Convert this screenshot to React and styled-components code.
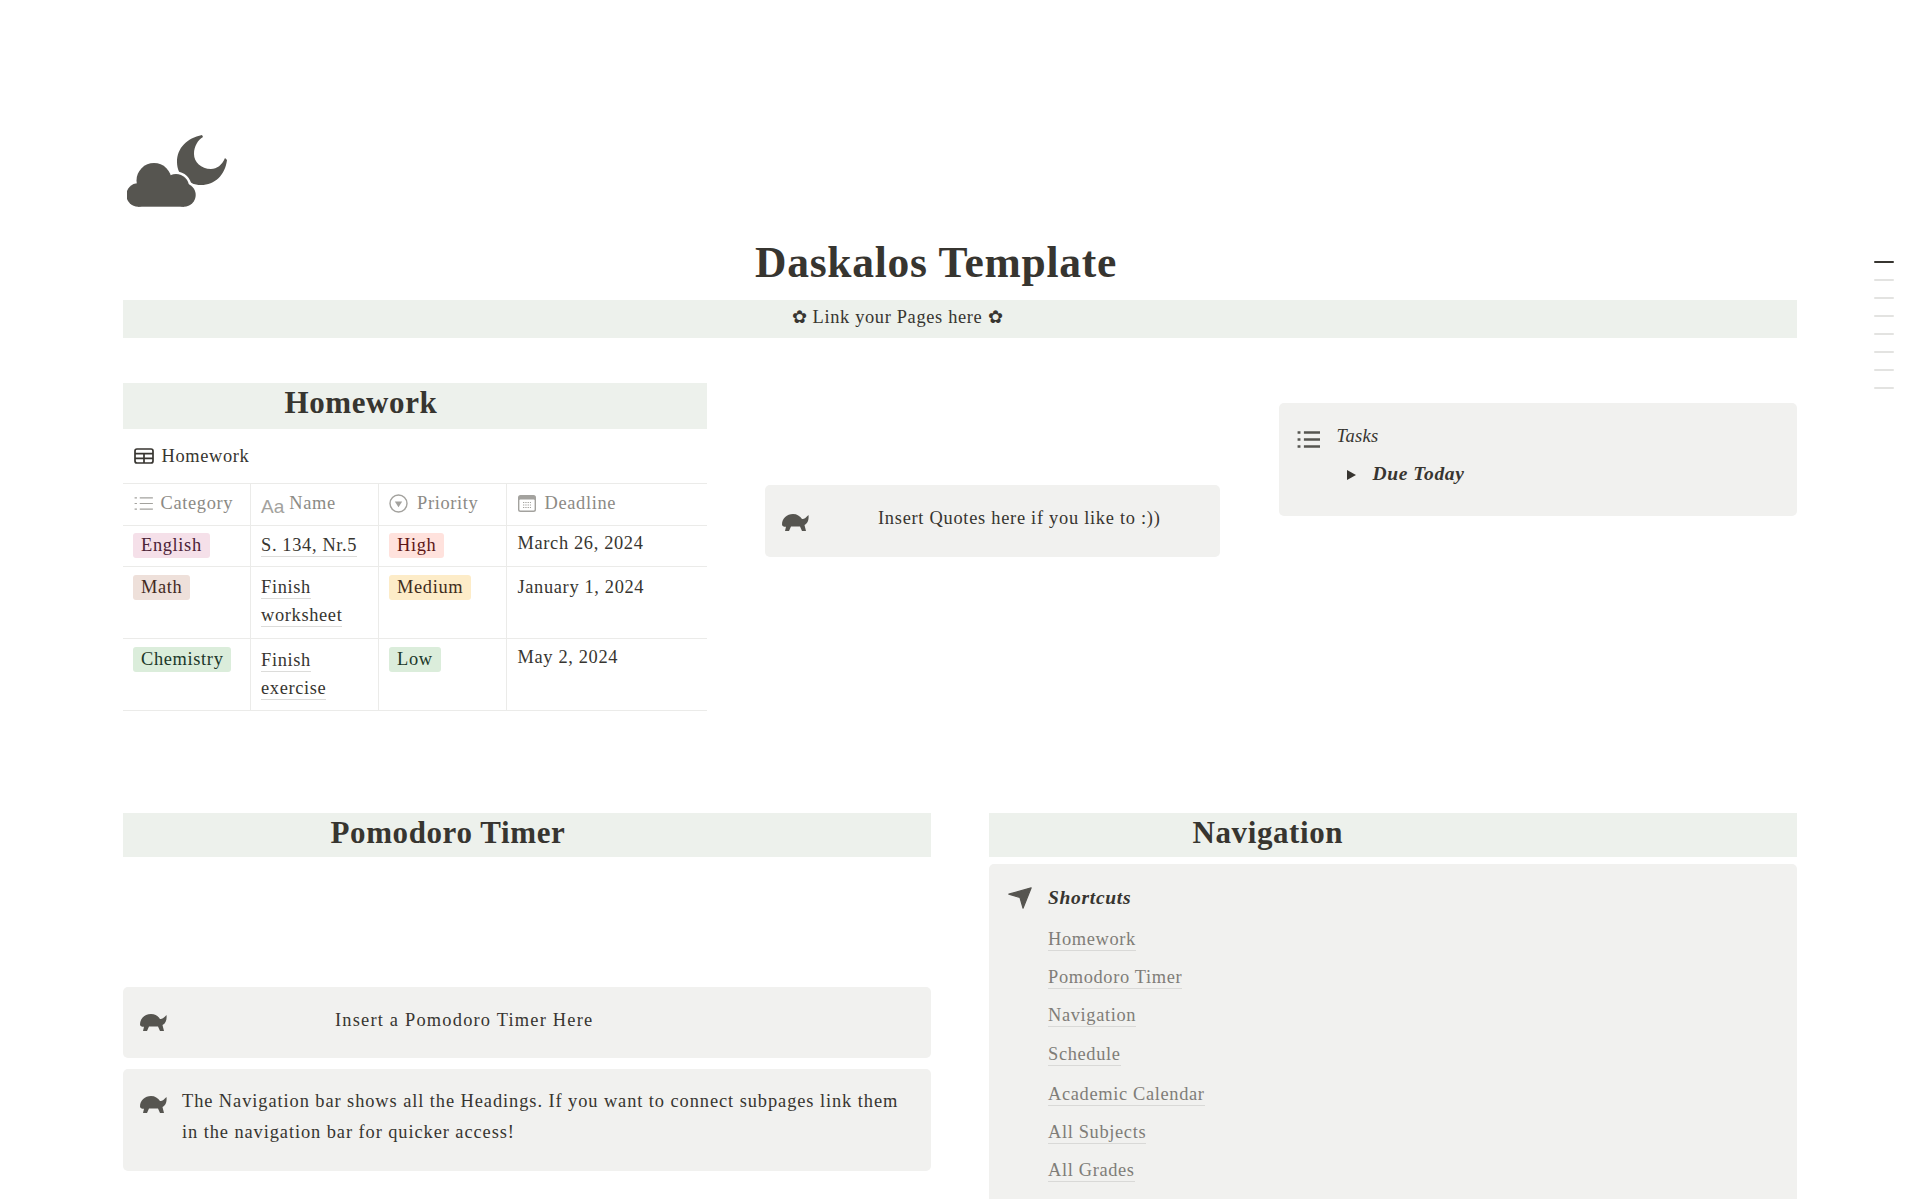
import React from "react";
import styled, { createGlobalStyle } from "styled-components";

const Global = createGlobalStyle`
  html, body { margin: 0; padding: 0; background: #fff; height: 1199px; overflow: hidden; }
  body { font-family: "Liberation Serif", "Times New Roman", serif; color: #373530; }
  * { box-sizing: border-box; }
`;

const serifBody = `font-size: 18.4px; letter-spacing: 0.65px;`;
const INK = "#565550";

const Page = styled.div`
  position: relative;
  width: 1920px;
  height: 1199px;
  overflow: hidden;
  padding: 135px 123px 0 123px;
`;
const PageIcon = styled.div`
  margin-left: 3.5px;
  height: 72px;
  display: flex;
`;
const Title = styled.h1`
  margin: 30px 0 0 0;
  padding-right: 48px;
  text-align: center;
  font-size: 43.5px;
  line-height: 50px;
  font-weight: 700;
  letter-spacing: 0.75px;
  color: #373530;
`;
const Banner = styled.div`
  margin-top: 13px;
  height: 38px;
  padding: 4px 125px 0 0;
  background: #edf1ec;
  text-align: center;
  line-height: 26px;
  ${serifBody}
`;
const TopRow = styled.div`
  margin-top: 45px;
  display: grid;
  grid-template-columns: 583.5px 455px 518px;
  column-gap: 58.5px;
  align-items: start;
`;
const Band = styled.h2`
  margin: 0;
  height: ${(p) => p.$h}px;
  padding: ${(p) => p.$top}px 0 0 ${(p) => p.$indent}px;
  background: #edf1ec;
  font-size: 31px;
  line-height: 36px;
  font-weight: 700;
  letter-spacing: 0.6px;
  color: #373530;
`;
const Caption = styled.div`
  display: flex;
  align-items: center;
  height: 54px;
  padding-left: 10.5px;
  gap: 8px;
  ${serifBody}
`;
const Table = styled.div`
  display: grid;
  grid-template-columns: 127.5px 128px 128.5px 200px;
  border-top: 1.5px solid #ebebe9;
`;
const HeadCell = styled.div`
  height: 42px;
  display: flex;
  align-items: center;
  gap: ${(p) => p.$gap}px;
  padding: 0 0 2px 10.5px;
  color: #8c8a85;
  border-bottom: 1.5px solid #ebebe9;
  border-right: ${(p) => (p.$last ? "none" : "1.5px solid #ebebe9")};
  ${serifBody}
`;
const Cell = styled.div`
  height: ${(p) => p.$h}px;
  padding: ${(p) => p.$top}px 8px 0 ${(p) => p.$left}px;
  line-height: 28px;
  border-bottom: 1.5px solid #ebebe9;
  border-right: ${(p) => (p.$last ? "none" : "1.5px solid #ebebe9")};
  ${serifBody}
`;
const Chip = styled.span`
  display: inline-block;
  height: 25px;
  padding: 0 8px;
  line-height: 25px;
  border-radius: 3px;
  background: ${(p) => p.$bg};
  color: ${(p) => p.$fg};
  vertical-align: top;
`;
const PageLink = styled.span`
  border-bottom: 1.5px solid #dcdcda;
  padding-bottom: 1px;
`;
const AaGlyph = styled.span`
  font-family: "Liberation Sans", Arial, sans-serif;
  font-size: 19px;
  letter-spacing: 0;
  line-height: 1;
  color: #a3a29e;
  margin-top: 5px;
`;
const Spacer = styled.div`
  padding-top: ${(p) => p.$top}px;
`;
const Callout = styled.div`
  background: #f1f1ef;
  border-radius: 5px;
  display: flex;
  align-items: flex-start;
  min-height: ${(p) => p.$h}px;
  padding: ${(p) => p.$pad};
  gap: ${(p) => p.$gap}px;
  line-height: 31px;
  font-size: 18.4px;
  letter-spacing: ${(p) => p.$spacing}px;
`;
const CalloutIcon = styled.div`
  flex: none;
  display: flex;
  margin-top: ${(p) => p.$top}px;
`;
const Stack = styled.div`
  display: flex;
  flex-direction: column;
`;
const TaskTitle = styled.div`
  font-style: italic;
  line-height: 24px;
  font-size: 18.5px;
  letter-spacing: 0.3px;
`;
const Toggle = styled.div`
  display: flex;
  align-items: center;
  margin: 14px 0 0 10px;
  gap: 17px;
  font-style: italic;
  font-weight: 700;
  font-size: 19.5px;
  letter-spacing: 0.6px;
  line-height: 24px;
  color: #373530;
`;
const Triangle = styled.span`
  width: 0;
  height: 0;
  border-left: 9px solid #373530;
  border-top: 5px solid transparent;
  border-bottom: 5px solid transparent;
  margin-top: 2px;
`;
const BottomRow = styled.div`
  margin-top: 102px;
  display: grid;
  grid-template-columns: 807.5px 808px;
  column-gap: 58.5px;
`;
const NavPanel = styled.div`
  margin-top: 7px;
  height: 500px;
  background: #f1f1ef;
  border-radius: 5px;
  padding: 23px 0 0 18.5px;
`;
const NavHead = styled.div`
  display: flex;
  gap: 16.5px;
  align-items: flex-start;
`;
const NavTitle = styled.div`
  font-style: italic;
  font-weight: 700;
  font-size: 19.5px;
  letter-spacing: 0.7px;
  line-height: 22px;
  color: #373530;
`;
const NavList = styled.div`
  margin: 18px 0 0 40.5px;
  display: flex;
  flex-direction: column;
  align-items: flex-start;
`;
const NavLink = styled.div`
  color: #7f7d78;
  line-height: 24px;
  height: ${(p) => p.$h}px;
  ${serifBody}
`;
const NavLinkText = styled.span`
  display: inline-block;
  height: 24px;
  border-bottom: 1.5px solid #d9d9d7;
`;
const Outline = styled.div`
  position: absolute;
  top: 261px;
  left: 1874px;
  display: flex;
  flex-direction: column;
  gap: 16px;
`;
const OutlineBar = styled.div`
  width: 20px;
  height: 2px;
  border-radius: 1px;
  background: ${(p) => (p.$on ? "#373530" : "#e3e3e1")};
`;

const cloudShapes = (
  <>
    <circle cx="27" cy="45.5" r="17.5" />
    <circle cx="49" cy="52" r="13" />
    <circle cx="11" cy="60" r="11.7" />
    <circle cx="57" cy="60" r="11.7" />
    <rect x="11" y="46" width="46" height="25.7" />
  </>
);
const MoonCloud = () => (
  <svg width="100" height="72" viewBox="0 0 100 72">
    <path
      fill={INK}
      d="M75 0 C60 3 50 13 50 27 C50 41 61 50 74 50 C88 50 98 40 100 25 L98 23 C95 30 90 34 84 34 C74 34 67 27 67 19 C67 11 71 5 76 2 Z"
    />
    <g fill="#fff" stroke="#fff" strokeWidth="5">{cloudShapes}</g>
    <g fill={INK}>{cloudShapes}</g>
  </svg>
);
const Turtle = () => (
  <svg width="27" height="17" viewBox="0 0 27 17">
    <path
      fill={INK}
      d="M0 10.5 C0 4.5 5 0 11 0 C15 0 18 2 20 5 C22 5.5 24 3.5 26.5 1 C27 5 26 9.5 22.5 11 L24 17 H20 L18 12.5 H9 L7 17 H3 L4 12.8 C1.5 12.8 0 12 0 10.5 Z"
    />
  </svg>
);
const NavArrow = () => (
  <svg width="24" height="22" viewBox="0 0 24 22">
    <path
      fill={INK}
      stroke={INK}
      strokeWidth="1.2"
      strokeLinejoin="round"
      d="M0.8 7.2 L23.2 0.8 L15 21.2 L12 10.5 Z"
    />
  </svg>
);
const TableIcon = () => (
  <svg width="20" height="16" viewBox="0 0 20 16" fill="none" stroke="#373530" strokeWidth="1.7">
    <rect x="1" y="1" width="18" height="14" rx="2" />
    <path d="M1 5.6 H19 M1 10.3 H19 M10 5.6 V15" />
  </svg>
);
const ListIcon = ({ color, w, h, sw }) => (
  <svg width={w} height={h} viewBox="0 0 20 16" fill="none" stroke={color} strokeWidth={sw}>
    <path d="M6 2 H20 M6 8 H20 M6 14 H20" />
    <path d="M0.5 2 H3 M0.5 8 H3 M0.5 14 H3" />
  </svg>
);
const PriorityIcon = () => (
  <svg width="19" height="19" viewBox="0 0 19 19">
    <circle cx="9.5" cy="9.5" r="8.5" fill="none" stroke="#a3a29e" strokeWidth="1.4" />
    <path d="M5.8 7.6 H13.2 L9.5 13.2 Z" fill="#a3a29e" />
  </svg>
);
const CalendarIcon = () => (
  <svg width="18" height="17" viewBox="0 0 18 17">
    <rect x="0" y="0" width="18" height="17" rx="2.5" fill="#a3a29e" />
    <rect x="1.4" y="4.6" width="15.2" height="11" rx="1" fill="#fff" />
    <path
      d="M5 7.5 H13 M5 10 H13 M5 12.5 H13"
      stroke="#a3a29e"
      strokeWidth="1.2"
      strokeDasharray="1.3 1"
    />
  </svg>
);

const rows = [
  {
    h: 41, chipTop: 7, cat: ["English", "#f5e0e9", "#4c2337"], name: ["S. 134, Nr.5"],
    pri: ["High", "#ffe2dd", "#5d1715"], date: "March 26, 2024", nameTop: 5, dateTop: 3,
  },
  {
    h: 72, chipTop: 8, cat: ["Math", "#eee0da", "#442a1e"], name: ["Finish ", "worksheet"],
    pri: ["Medium", "#fdecc8", "#402c1b"], date: "January 1, 2024", nameTop: 6, dateTop: 6,
  },
  {
    h: 72, chipTop: 8, cat: ["Chemistry", "#dbeddb", "#1c3829"], name: ["Finish ", "exercise"],
    pri: ["Low", "#dbeddb", "#1c3829"], date: "May 2, 2024", nameTop: 7, dateTop: 4,
  },
];

const navItems = [
  ["Homework", 38], ["Pomodoro Timer", 38], ["Navigation", 39], ["Schedule", 40],
  ["Academic Calendar", 38], ["All Subjects", 38], ["All Grades", 38],
];

export default function App() {
  return (
    <Page>
      <Global />
      <PageIcon><MoonCloud /></PageIcon>
      <Title>Daskalos Template</Title>
      <Banner>✿ Link your Pages here ✿</Banner>

      <TopRow>
        <div>
          <Band $h={46} $top={2} $indent={161.5}>Homework</Band>
          <Caption><TableIcon />Homework</Caption>
          <Table>
            <HeadCell $gap={8}><ListIcon color="#a3a29e" w={19} h={15} sw={1.3} />Category</HeadCell>
            <HeadCell $gap={5}><AaGlyph>Aa</AaGlyph>Name</HeadCell>
            <HeadCell $gap={9}><PriorityIcon />Priority</HeadCell>
            <HeadCell $gap={9} $last><CalendarIcon />Deadline</HeadCell>
            {rows.map((r) => (
              <React.Fragment key={r.date}>
                <Cell $h={r.h} $top={r.chipTop} $left={10}><Chip $bg={r.cat[1]} $fg={r.cat[2]}>{r.cat[0]}</Chip></Cell>
                <Cell $h={r.h} $top={r.nameTop} $left={10.5}>
                  {r.name.map((n) => <PageLink key={n}>{n}</PageLink>)}
                </Cell>
                <Cell $h={r.h} $top={r.chipTop} $left={10.5}><Chip $bg={r.pri[1]} $fg={r.pri[2]}>{r.pri[0]}</Chip></Cell>
                <Cell $h={r.h} $top={r.dateTop} $left={10.5} $last>{r.date}</Cell>
              </React.Fragment>
            ))}
          </Table>
        </div>

        <Spacer $top={102}>
          <Callout $h={72} $pad="18px 0 0 17px" $gap={69} $spacing={0.72}>
            <CalloutIcon $top={11}><Turtle /></CalloutIcon>
            <div>Insert Quotes here if you like to :))</div>
          </Callout>
        </Spacer>

        <Spacer $top={20}>
          <Callout $h={113} $pad="21px 0 0 18px" $gap={17} $spacing={0.65}>
            <CalloutIcon $top={6}>
              <ListIcon color={INK} w={23} h={19} sw={2.2} />
            </CalloutIcon>
            <Stack>
              <TaskTitle>Tasks</TaskTitle>
              <Toggle><Triangle />Due Today</Toggle>
            </Stack>
          </Callout>
        </Spacer>
      </TopRow>

      <BottomRow>
        <div>
          <Band $h={44} $top={2} $indent={207.5}>Pomodoro Timer</Band>
          <Spacer $top={130}>
            <Callout $h={71} $pad="18px 0 0 17px" $gap={168} $spacing={1.2}>
              <CalloutIcon $top={9}><Turtle /></CalloutIcon>
              <div>Insert a Pomodoro Timer Here</div>
            </Callout>
          </Spacer>
          <Spacer $top={11}>
            <Callout $h={102} $pad="17px 20px 0 17px" $gap={15} $spacing={0.92}>
              <CalloutIcon $top={10}><Turtle /></CalloutIcon>
              <div>
                The Navigation bar shows all the Headings. If you want to connect subpages link them
                in the navigation bar for quicker access!
              </div>
            </Callout>
          </Spacer>
        </div>

        <div>
          <Band $h={44} $top={2} $indent={203.5}>Navigation</Band>
          <NavPanel>
            <NavHead>
              <NavArrow />
              <NavTitle>Shortcuts</NavTitle>
            </NavHead>
            <NavList>
              {navItems.map(([label, h]) => (
                <NavLink key={label} $h={h}><NavLinkText>{label}</NavLinkText></NavLink>
              ))}
            </NavList>
          </NavPanel>
        </div>
      </BottomRow>

      <Outline>
        {[0, 1, 2, 3, 4, 5, 6, 7].map((i) => <OutlineBar key={i} $on={i === 0} />)}
      </Outline>
    </Page>
  );
}
